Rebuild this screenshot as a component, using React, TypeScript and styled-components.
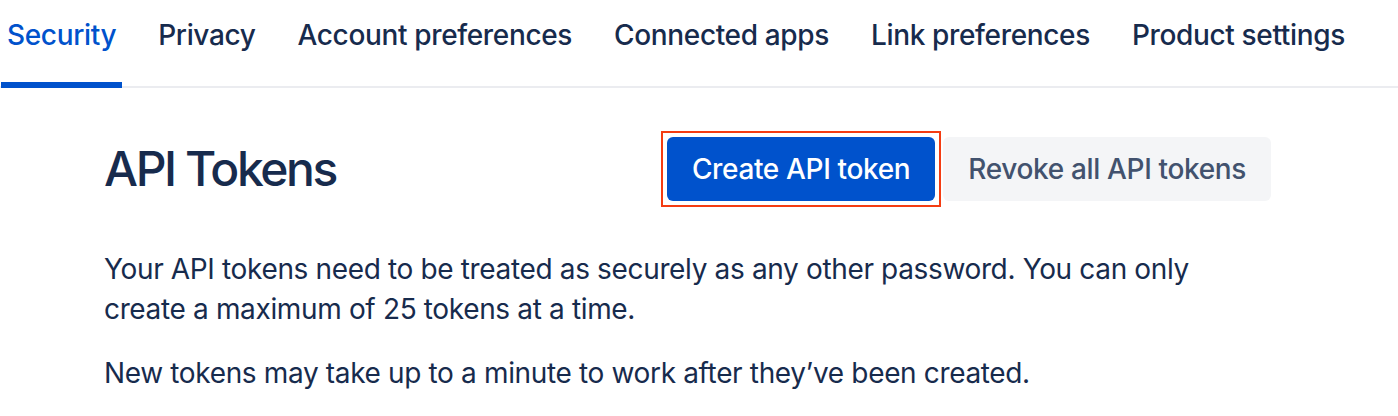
import * as React from "react";
import styled, { createGlobalStyle } from "styled-components";

const GlobalStyle = createGlobalStyle`
  html, body {
    margin: 0;
    padding: 0;
    background: #ffffff;
  }

  body {
    font-family: Inter, "Noto Sans", "Liberation Sans", sans-serif;
    color: #172b4d;
    -webkit-font-smoothing: antialiased;
  }
`;

const TabList = styled.nav`
  display: flex;
  gap: 30px;
  padding-left: 1px;
  border-bottom: 2px solid #ebecf0;
`;

const Tab = styled.a<{ $active?: boolean }>`
  position: relative;
  padding: 15px 6px 31px;
  font-size: 28px;
  line-height: 40px;
  font-weight: 500;
  letter-spacing: -0.35px;
  color: ${(p) => (p.$active ? "#0052cc" : "#172b4d")};
  text-decoration: none;
  white-space: nowrap;
  cursor: pointer;

  &::after {
    content: "";
    display: ${(p) => (p.$active ? "block" : "none")};
    position: absolute;
    left: 0;
    right: 0;
    bottom: -2px;
    height: 6px;
    background: #0052cc;
  }
`;

const Content = styled.main`
  padding: 49px 127px 0 104px;
`;

const Header = styled.div`
  display: flex;
  align-items: center;
  justify-content: space-between;
  height: 64px;
`;

const Title = styled.h1`
  margin: 0;
  font-size: 48px;
  line-height: 56px;
  font-weight: 500;
  letter-spacing: -2.4px;
  color: #172b4d;
`;

const Actions = styled.div`
  display: flex;
  gap: 8px;
`;

// red annotation box drawn round the primary button
const Highlight = styled.span`
  display: inline-flex;
  margin: -6px;
  padding: 4px;
  border: 2px solid #f43c12;
`;

const Button = styled.button<{ $primary?: boolean }>`
  height: 64px;
  padding: 0 25px;
  border: none;
  border-radius: 6px;
  font-family: inherit;
  font-size: 28px;
  font-weight: 500;
  letter-spacing: -0.35px;
  background: ${(p) => (p.$primary ? "#0052cc" : "#f4f5f7")};
  color: ${(p) => (p.$primary ? "#ffffff" : "#42526e")};
  cursor: pointer;
`;

const Text = styled.p`
  margin: 48px 0 0;
  font-size: 28px;
  line-height: 40px;
  letter-spacing: -0.35px;
  color: #172b4d;

  & + & {
    margin-top: 24px;
  }
`;

const tabs = [
  "Security",
  "Privacy",
  "Account preferences",
  "Connected apps",
  "Link preferences",
  "Product settings",
];

export default function App() {
  return (
    <>
      <GlobalStyle />
      <TabList>
        {tabs.map((t, i) => (
          <Tab key={t} $active={i === 0}>
            {t}
          </Tab>
        ))}
      </TabList>
      <Content>
        <Header>
          <Title>API Tokens</Title>
          <Actions>
            <Highlight>
              <Button $primary>Create API token</Button>
            </Highlight>
            <Button>Revoke all API tokens</Button>
          </Actions>
        </Header>
        <Text>
          Your API tokens need to be treated as securely as any other password. You can only
          create a maximum of 25 tokens at a time.
        </Text>
        <Text>New tokens may take up to a minute to work after they’ve been created.</Text>
      </Content>
    </>
  );
}
